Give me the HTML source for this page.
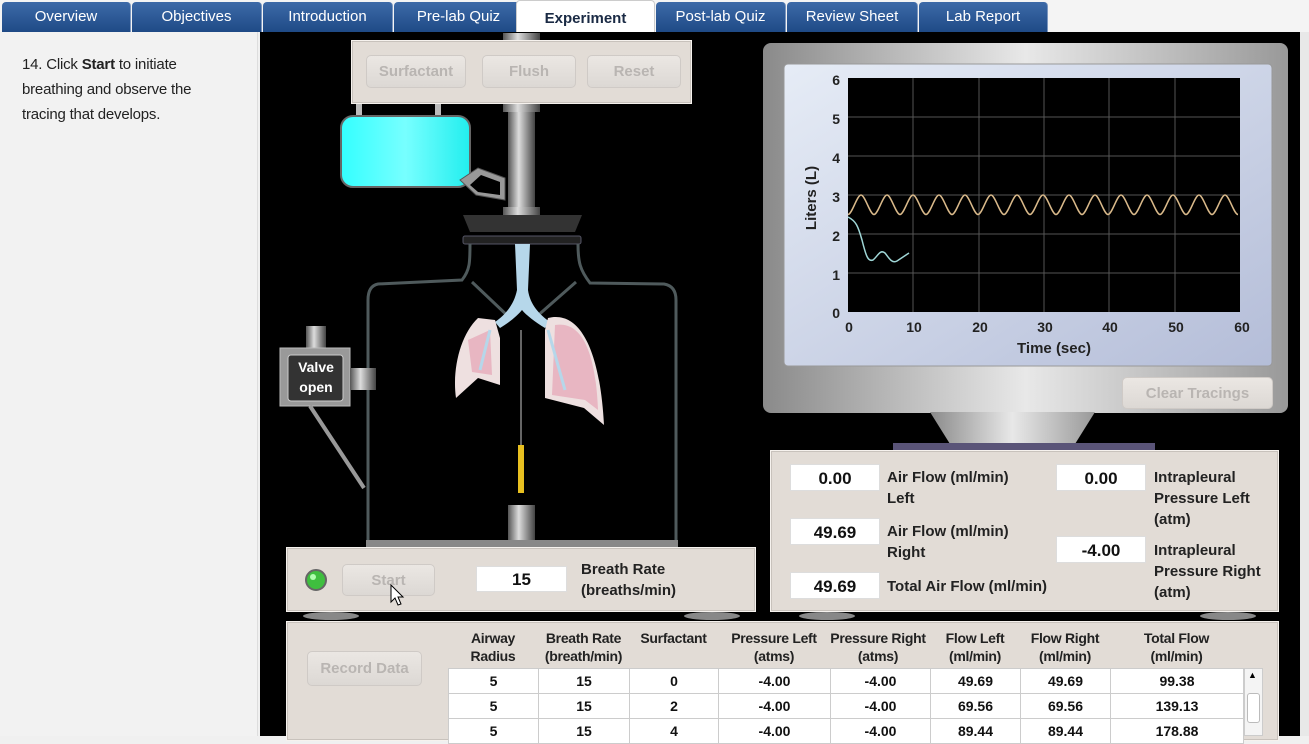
<!DOCTYPE html>
<html><head><meta charset="utf-8"><style>
*{margin:0;padding:0;box-sizing:border-box}
body{width:1309px;height:736px;overflow:hidden;background:#f0f0f0;font-family:"Liberation Sans",Arial,sans-serif;position:relative}
.a{position:absolute}
.tabs{left:0;top:0;width:1309px;height:32px;background:#f4f4f4}
.tab{position:absolute;top:2px;height:30px;background:linear-gradient(#3d6aa8,#1f4a86);color:#fff;font-size:15px;text-align:center;line-height:30px;border-radius:4px 4px 0 0;border-right:1px solid #7c97bf}
.tab.on{background:#fff;color:#1a2a44;font-weight:bold;top:0;height:33px;line-height:36px;border:1px solid #ccc;border-bottom:none}
.left{left:0;top:32px;width:258px;height:704px;background:#f2f2f2;border-right:1px solid #ddd}
.left p{position:absolute;left:22px;top:20px;font-size:15px;line-height:25px;color:#222;width:205px;letter-spacing:-0.2px}
.sim{left:260px;top:32px;width:1040px;height:704px;background:#000}
.panel{position:absolute;background:#e2dcd6;border:1px solid #f6f2ee;box-shadow:inset 0 0 0 1px #c8c2bc}
.btn{position:absolute;background:linear-gradient(#ebe7e3,#dcd8d4);border:1px solid #cfcac6;border-radius:5px;color:#b9b5b2;font-weight:bold;font-size:15px;text-align:center}
.inp{position:absolute;background:#fff;font-weight:bold;font-size:17px;text-align:center;color:#111;border:1px solid #ddd}
.lbl{position:absolute;font-weight:bold;font-size:15px;color:#222;line-height:21px}
table{border-collapse:collapse;font-family:"Liberation Sans Narrow","Liberation Sans",Arial,sans-serif}
td{border:1px solid #ccc;background:#fff;text-align:center;font-weight:bold;font-size:14px;height:25px;color:#111}
.th{position:absolute;top:629px;font-weight:bold;font-size:14px;text-align:center;line-height:18px;color:#222;font-family:"Liberation Sans Narrow","Liberation Sans",Arial,sans-serif;white-space:nowrap;letter-spacing:-0.3px}
</style></head><body>
<div class="a tabs">
<div class="tab" style="left:2px;width:129px">Overview</div>
<div class="tab" style="left:132px;width:130px">Objectives</div>
<div class="tab" style="left:263px;width:130px">Introduction</div>
<div class="tab" style="left:394px;width:130px">Pre-lab Quiz</div>
<div class="tab on" style="left:516px;width:139px">Experiment</div>
<div class="tab" style="left:656px;width:130px">Post-lab Quiz</div>
<div class="tab" style="left:787px;width:131px">Review Sheet</div>
<div class="tab" style="left:919px;width:129px">Lab Report</div>
</div>
<div class="a left"><p>14. Click <b>Start</b> to initiate breathing and observe the tracing that develops.</p></div>
<div class="a sim"></div>
<div class="a" style="left:1300px;top:32px;width:9px;height:704px;background:#e8e8e8"></div>

<svg class="a" style="left:0;top:0" width="1309" height="736">
<defs>
<linearGradient id="metal" x1="0" x2="1"><stop offset="0" stop-color="#555"/><stop offset=".4" stop-color="#ddd"/><stop offset="1" stop-color="#444"/></linearGradient>
<linearGradient id="cy" x1="0" x2="1"><stop offset="0" stop-color="#3ff"/><stop offset=".5" stop-color="#7ff"/><stop offset="1" stop-color="#2ee"/></linearGradient>
<linearGradient id="mon" x1="0" x2="1"><stop offset="0" stop-color="#8a8a8a"/><stop offset=".5" stop-color="#e8e8e8"/><stop offset="1" stop-color="#999"/></linearGradient>
<linearGradient id="scr" x1="0" y1="0" x2="1" y2="1"><stop offset="0" stop-color="#e6ecf6"/><stop offset="1" stop-color="#b4bdd8"/></linearGradient>
</defs>
<rect x="503" y="33" width="37" height="8" fill="url(#metal)"/>
<rect x="356" y="104" width="6" height="14" fill="#bbb"/><rect x="435" y="104" width="6" height="14" fill="#bbb"/>
<rect x="503" y="104" width="37" height="8" fill="url(#metal)"/>
<rect x="508" y="112" width="27" height="98" fill="url(#metal)"/>
<rect x="503" y="207" width="37" height="8" fill="url(#metal)"/>
<rect x="341" y="116" width="129" height="71" rx="12" fill="url(#cy)" stroke="#666" stroke-width="2"/>
<path d="M460,180 L478,168 L505,178 L505,200 L476,195Z" fill="#999" stroke="#555"/>
<path d="M470,185 L481,175 L500,182 L500,195 L478,192Z" fill="#000"/>
<path d="M463,215 L582,215 L575,232 L470,232Z" fill="#333"/>
<rect x="463" y="236" width="118" height="8" rx="2" fill="#222" stroke="#556"/>
<path d="M470,244 C470,262 470,270 462,280 L378,284 Q368,286 368,300 L368,540 M676,540 L676,300 Q676,286 664,284 L590,283 C580,270 578,262 578,244" fill="none" stroke="#4f5a5c" stroke-width="3"/>
<path d="M472,282 L510,318 M576,282 L535,318" stroke="#4f5a5c" stroke-width="3"/>
<path d="M515,244 L530,244 L528,290 C530,305 540,315 550,322 L545,328 C535,322 526,315 522,310 C518,315 510,322 500,328 L495,322 C505,315 514,305 517,290Z" fill="#b6d7ea"/>
<path d="M478,318 L495,320 L500,338 L500,385 L478,378 L456,398 C452,370 460,335 478,318Z" fill="#eee0e0"/>
<path d="M468,340 L490,330 L492,375 L472,372Z" fill="#e8b6c2"/>
<path d="M548,318 C580,310 600,350 604,425 L584,408 L545,398 L545,330Z" fill="#eee0e0"/>
<path d="M555,325 C585,320 596,360 598,410 L585,400 L552,395Z" fill="#e8b6c2"/>
<path d="M490,330 L480,370 M548,330 L565,390" stroke="#b6d7ea" stroke-width="3"/>
<line x1="521" y1="330" x2="521" y2="455" stroke="#888" stroke-width="1.5"/>
<rect x="518" y="445" width="6" height="48" fill="#e8c020"/>
<rect x="508" y="505" width="27" height="36" fill="url(#metal)"/>
<rect x="366" y="540" width="312" height="7" fill="#888"/>
<rect x="306" y="326" width="20" height="24" fill="url(#metal)"/>
<rect x="280" y="348" width="70" height="58" fill="#999" stroke="#bbb"/>
<rect x="288" y="355" width="55" height="46" rx="3" fill="#333" stroke="#ccc"/>
<text x="316" y="372" fill="#fff" font-size="14" font-weight="bold" text-anchor="middle">Valve</text>
<text x="316" y="392" fill="#fff" font-size="14" font-weight="bold" text-anchor="middle">open</text>
<rect x="350" y="368" width="26" height="22" fill="url(#metal)"/>
<line x1="310" y1="406" x2="364" y2="488" stroke="#999" stroke-width="4"/>
<rect x="763" y="43" width="525" height="370" rx="8" fill="url(#mon)"/>
<rect x="784" y="64" width="488" height="302" rx="4" fill="url(#scr)" stroke="#999"/>
<path d="M930,412 L1095,412 L1075,444 L950,444Z" fill="url(#mon)"/>
<rect x="893" y="443" width="262" height="7" fill="#5a5478"/>
<rect x="848" y="78" width="392" height="234" fill="#000"/>
<g stroke="#555" stroke-width="1">
<line x1="848" y1="117" x2="1240" y2="117"/><line x1="848" y1="156" x2="1240" y2="156"/><line x1="848" y1="195" x2="1240" y2="195"/><line x1="848" y1="234" x2="1240" y2="234"/><line x1="848" y1="273" x2="1240" y2="273"/>
<line x1="913" y1="78" x2="913" y2="312"/><line x1="979" y1="78" x2="979" y2="312"/><line x1="1044" y1="78" x2="1044" y2="312"/><line x1="1109" y1="78" x2="1109" y2="312"/><line x1="1175" y1="78" x2="1175" y2="312"/>
</g>
<path d="M848,214.5 c4,0 9,-19.5 13,-19.5 s9,19.5 13,19.5 s9,-19.5 13,-19.5 s9,19.5 13,19.5 s9,-19.5 13,-19.5 s9,19.5 13,19.5 s9,-19.5 13,-19.5 s9,19.5 13,19.5 s9,-19.5 13,-19.5 s9,19.5 13,19.5 s9,-19.5 13,-19.5 s9,19.5 13,19.5 s9,-19.5 13,-19.5 s9,19.5 13,19.5 s9,-19.5 13,-19.5 s9,19.5 13,19.5 s9,-19.5 13,-19.5 s9,19.5 13,19.5 s9,-19.5 13,-19.5 s9,19.5 13,19.5 s9,-19.5 13,-19.5 s9,19.5 13,19.5 s9,-19.5 13,-19.5 s9,19.5 13,19.5 s9,-19.5 13,-19.5 s9,19.5 13,19.5 s9,-19.5 13,-19.5 s9,19.5 13,19.5 s9,-19.5 13,-19.5 s9,19.5 13,19.5" fill="none" stroke="#d9b98a" stroke-width="1.5"/>
<path d="M848,217 C856,221 858,226 862,240 C866,256 868,262 873,260 C878,256 880,249 885,253 C889,258 892,264 897,261 L909,253" fill="none" stroke="#9fd6d6" stroke-width="1.5"/>
<g font-size="14" font-weight="bold" fill="#222" text-anchor="end">
<text x="840" y="85">6</text><text x="840" y="124">5</text><text x="840" y="163">4</text><text x="840" y="202">3</text><text x="840" y="241">2</text><text x="840" y="280">1</text><text x="840" y="318">0</text>
</g>
<g font-size="14" font-weight="bold" fill="#222" text-anchor="middle">
<text x="849" y="332">0</text><text x="914" y="332">10</text><text x="980" y="332">20</text><text x="1045" y="332">30</text><text x="1110" y="332">40</text><text x="1176" y="332">50</text><text x="1242" y="332">60</text>
<text x="1054" y="353" font-size="15">Time (sec)</text>
<text transform="translate(816,198) rotate(-90)" font-size="15">Liters (L)</text>
</g>
<ellipse cx="331" cy="616" rx="28" ry="4" fill="#888"/><ellipse cx="712" cy="616" rx="28" ry="4" fill="#888"/>
<ellipse cx="827" cy="616" rx="28" ry="4" fill="#888"/><ellipse cx="1228" cy="616" rx="28" ry="4" fill="#888"/>
</svg>

<div class="panel" style="left:351px;top:40px;width:341px;height:64px"></div>
<div class="btn" style="left:366px;top:55px;width:100px;height:33px;line-height:32px">Surfactant</div>
<div class="btn" style="left:482px;top:55px;width:94px;height:33px;line-height:32px">Flush</div>
<div class="btn" style="left:587px;top:55px;width:94px;height:33px;line-height:32px">Reset</div>
<div class="btn" style="left:1122px;top:377px;width:151px;height:32px;line-height:31px">Clear Tracings</div>

<div class="panel" style="left:286px;top:547px;width:470px;height:65px"></div>
<svg class="a" style="left:304px;top:568px" width="24" height="24"><circle cx="12" cy="12" r="10" fill="#3fbf3f" stroke="#666" stroke-width="2"/><circle cx="9" cy="9" r="3" fill="#afffaf"/></svg>
<div class="btn" style="left:342px;top:564px;width:93px;height:32px;line-height:31px">Start</div>
<svg class="a" style="left:390px;top:584px" width="16" height="24"><path d="M1,1 L1,18 L5,14 L8,21 L11,20 L8,13 L13,13Z" fill="#fff" stroke="#000"/></svg>
<div class="inp" style="left:476px;top:566px;width:91px;height:26px;line-height:25px">15</div>
<div class="lbl" style="left:581px;top:559px">Breath Rate<br>(breaths/min)</div>

<div class="panel" style="left:770px;top:450px;width:509px;height:162px"></div>
<div class="inp" style="left:790px;top:464px;width:90px;height:27px;line-height:27px">0.00</div>
<div class="inp" style="left:790px;top:518px;width:90px;height:27px;line-height:27px">49.69</div>
<div class="inp" style="left:790px;top:572px;width:90px;height:27px;line-height:27px">49.69</div>
<div class="inp" style="left:1056px;top:464px;width:90px;height:27px;line-height:27px">0.00</div>
<div class="inp" style="left:1056px;top:536px;width:90px;height:27px;line-height:27px">-4.00</div>
<div class="lbl" style="left:887px;top:467px">Air Flow (ml/min)<br>Left</div>
<div class="lbl" style="left:887px;top:521px">Air Flow (ml/min)<br>Right</div>
<div class="lbl" style="left:887px;top:576px">Total Air Flow (ml/min)</div>
<div class="lbl" style="left:1154px;top:467px">Intrapleural<br>Pressure Left<br>(atm)</div>
<div class="lbl" style="left:1154px;top:540px">Intrapleural<br>Pressure Right<br>(atm)</div>

<div class="panel" style="left:286px;top:621px;width:993px;height:120px"></div>
<div class="btn" style="left:307px;top:651px;width:115px;height:35px;line-height:34px">Record Data</div>
<div class="th" style="left:448px;width:90px">Airway<br>Radius</div>
<div class="th" style="left:538px;width:91px">Breath Rate<br>(breath/min)</div>
<div class="th" style="left:629px;width:89px">Surfactant</div>
<div class="th" style="left:718px;width:112px">Pressure Left<br>(atms)</div>
<div class="th" style="left:826px;width:104px">Pressure Right<br>(atms)</div>
<div class="th" style="left:930px;width:90px">Flow Left<br>(ml/min)</div>
<div class="th" style="left:1020px;width:90px">Flow Right<br>(ml/min)</div>
<div class="th" style="left:1110px;width:133px">Total Flow<br>(ml/min)</div>
<table class="a" style="left:448px;top:668px">
<tr><td style="width:90px">5</td><td style="width:91px">15</td><td style="width:89px">0</td><td style="width:112px">-4.00</td><td style="width:100px">-4.00</td><td style="width:90px">49.69</td><td style="width:90px">49.69</td><td style="width:133px">99.38</td></tr>
<tr><td>5</td><td>15</td><td>2</td><td>-4.00</td><td>-4.00</td><td>69.56</td><td>69.56</td><td>139.13</td></tr>
<tr><td>5</td><td>15</td><td>4</td><td>-4.00</td><td>-4.00</td><td>89.44</td><td>89.44</td><td>178.88</td></tr>
</table>
<div class="a" style="left:1244px;top:668px;width:19px;height:68px;background:#f4f4f4;border:1px solid #ccc"></div>
<div class="a" style="left:1247px;top:693px;width:13px;height:30px;background:#fff;border:1px solid #bbb;border-radius:3px"></div>
<div class="a" style="left:1248px;top:670px;font-size:9px">▲</div>
</body></html>
